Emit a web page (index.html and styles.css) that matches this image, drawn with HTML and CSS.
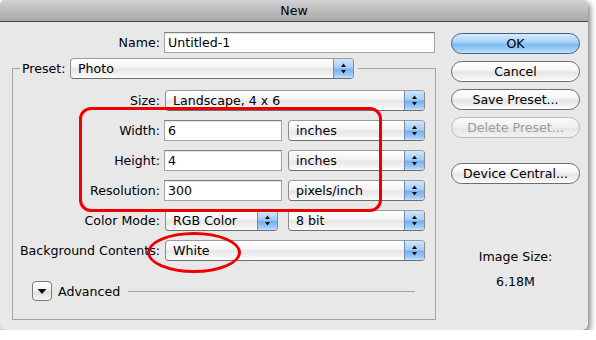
FILE: index.html
```html
<!DOCTYPE html>
<html>
<head>
<meta charset="utf-8">
<link rel="stylesheet" href="styles.css">
</head>
<body>
<div class="window">
  <div class="titlebar">New</div>
  <div class="content">
    <div class="left">
      <div class="row">
        <span class="lbl lbl-name">Name:</span>
        <span class="field f-name">Untitled-1</span>
      </div>
      <fieldset class="group">
        <legend class="legend">
          <span class="legend-text">Preset:</span>
          <span class="select s-preset"><span class="val">Photo</span><span class="arrow"><svg width="19" height="19" viewBox="0 0 19 19"><polygon points="7,8 12,8 9.5,4.5" /><polygon points="7,11 12,11 9.5,14.5" /></svg></span></span>
        </legend>
        <div class="rows">
          <div class="row">
            <span class="lbl">Size:</span>
            <span class="select s-wide"><span class="val">Landscape, 4 x 6</span><span class="arrow"><svg width="19" height="19" viewBox="0 0 19 19"><polygon points="7,8 12,8 9.5,4.5" /><polygon points="7,11 12,11 9.5,14.5" /></svg></span></span>
          </div>
          <div class="row">
            <span class="lbl">Width:</span>
            <span class="field f-num">6</span>
            <span class="select s-unit"><span class="val">inches</span><span class="arrow"><svg width="19" height="19" viewBox="0 0 19 19"><polygon points="7,8 12,8 9.5,4.5" /><polygon points="7,11 12,11 9.5,14.5" /></svg></span></span>
          </div>
          <div class="row">
            <span class="lbl">Height:</span>
            <span class="field f-num">4</span>
            <span class="select s-unit"><span class="val">inches</span><span class="arrow"><svg width="19" height="19" viewBox="0 0 19 19"><polygon points="7,8 12,8 9.5,4.5" /><polygon points="7,11 12,11 9.5,14.5" /></svg></span></span>
          </div>
          <div class="row">
            <span class="lbl">Resolution:</span>
            <span class="field f-num">300</span>
            <span class="select s-unit"><span class="val">pixels/inch</span><span class="arrow"><svg width="19" height="19" viewBox="0 0 19 19"><polygon points="7,8 12,8 9.5,4.5" /><polygon points="7,11 12,11 9.5,14.5" /></svg></span></span>
          </div>
          <div class="row">
            <span class="lbl">Color Mode:</span>
            <span class="select s-mode"><span class="val">RGB Color</span><span class="arrow"><svg width="19" height="19" viewBox="0 0 19 19"><polygon points="7,8 12,8 9.5,4.5" /><polygon points="7,11 12,11 9.5,14.5" /></svg></span></span>
            <span class="select s-unit s-bit"><span class="val">8 bit</span><span class="arrow"><svg width="19" height="19" viewBox="0 0 19 19"><polygon points="7,8 12,8 9.5,4.5" /><polygon points="7,11 12,11 9.5,14.5" /></svg></span></span>
          </div>
          <div class="row">
            <span class="lbl">Background Contents:</span>
            <span class="select s-wide"><span class="val">White</span><span class="arrow"><svg width="19" height="19" viewBox="0 0 19 19"><polygon points="7,8 12,8 9.5,4.5" /><polygon points="7,11 12,11 9.5,14.5" /></svg></span></span>
          </div>
        </div>
        <div class="adv-row">
          <span class="disclosure"><svg width="18" height="18" viewBox="0 0 18 18"><polygon points="4.5,7 13.5,7 9,12" /></svg></span>
          <span class="adv-text">Advanced</span>
          <span class="rule"></span>
        </div>
      </fieldset>
    </div>
    <div class="right">
      <span class="btn btn-ok">OK</span>
      <span class="btn">Cancel</span>
      <span class="btn">Save Preset...</span>
      <span class="btn btn-disabled">Delete Preset...</span>
      <span class="btn btn-device">Device Central...</span>
      <div class="imgsize">
        <div>Image Size:</div>
        <div>6.18M</div>
      </div>
    </div>
  </div>
  <div class="annot-rect"></div>
  <div class="annot-ellipse"></div>
</div>
</body>
</html>
```
FILE: styles.css
```css
html, body {
  margin: 0;
  padding: 0;
  background: #ffffff;
}
body {
  font-family: "DejaVu Sans", "Liberation Sans", sans-serif;
  font-size: 12.6px;
  color: #000;
}
.window {
  position: relative;
  width: 588px;
  height: 330px;
  background: #e8e8e8;
  border-radius: 5px 5px 6px 6px;
  box-shadow: 2px 3px 6px rgba(0, 0, 0, 0.55);
}
.titlebar {
  height: 21px;
  line-height: 21px;
  text-align: center;
  border-bottom: 1px solid #454545;
  border-radius: 5px 5px 0 0;
  background: linear-gradient(#d2d2d2, #a8a8a8);
}
.content {
  display: flex;
  padding-top: 10px;
}
.left {
  width: 436px;
}
.right {
  width: 129px;
  margin-left: 15px;
  display: flex;
  flex-direction: column;
}
.row {
  display: flex;
  align-items: center;
  height: 21px;
}
.rows {
  display: flex;
  flex-direction: column;
  gap: 9px;
}
.lbl {
  width: 147px;
  margin-right: 5px;
  text-align: right;
  white-space: nowrap;
}
.lbl-name {
  width: 160px;
  margin-right: 4px;
}
.field {
  display: block;
  box-sizing: border-box;
  height: 21px;
  line-height: 19px;
  padding-left: 3px;
  background: #fff;
  border: 1px solid #a2a2a2;
  border-top-color: #808080;
  box-shadow: inset 0 1px 1px rgba(0, 0, 0, 0.12);
}
.f-name {
  width: 271px;
}
.f-num {
  width: 118px;
  margin-left: -1px;
  margin-right: 6px;
}
.group {
  box-sizing: border-box;
  width: 424px;
  min-width: 0;
  margin: 5px 0 0 12px;
  padding: 11px 0 18px 0;
  border: 1px solid #a4a4a4;
}
.legend {
  display: flex;
  align-items: center;
  margin-left: 7px;
  padding: 0 4px 0 2px;
}
.legend-text {
  width: 44px;
  margin-right: 4px;
}
.select {
  box-sizing: border-box;
  height: 21px;
  display: flex;
  align-items: stretch;
  border: 1px solid #8a8a8a;
  border-top-color: #9a9a9a;
  border-bottom-color: #6e6e6e;
  border-radius: 4px;
  overflow: hidden;
  background: linear-gradient(#ffffff 0%, #f5f5f5 40%, #e7e7e7 55%, #f4f4f4 85%, #ffffff 100%);
}
.select .val {
  flex: 1;
  padding-left: 7px;
  line-height: 19px;
  white-space: nowrap;
}
.select .arrow {
  width: 19px;
  border-left: 1px solid #6f8cb8;
  background: linear-gradient(#d1e6fb 0%, #a6cdf5 45%, #78b0ee 55%, #9ccaf7 85%, #c6e3fd 100%);
}
.select .arrow svg {
  display: block;
}
.select .arrow polygon {
  fill: #111;
}
.s-preset {
  width: 284px;
}
.s-wide {
  width: 260px;
}
.s-unit {
  width: 137px;
}
.s-mode {
  width: 113px;
  margin-right: 10px;
}
.adv-row {
  display: flex;
  align-items: center;
  height: 20px;
  margin-top: 20px;
  padding-left: 19px;
}
.disclosure {
  box-sizing: border-box;
  width: 20px;
  height: 20px;
  border: 1px solid #7a7a7a;
  border-radius: 4px;
  background: linear-gradient(#ffffff, #efefef 50%, #dedede 55%, #f6f6f6);
}
.disclosure svg {
  display: block;
}
.disclosure polygon {
  fill: #111;
}
.adv-text {
  margin-left: 6px;
}
.rule {
  flex: 1;
  height: 1px;
  margin: 0 20px 0 8px;
  background: #a4a4a4;
}
.btn {
  display: block;
  box-sizing: border-box;
  height: 21px;
  line-height: 19px;
  text-align: center;
  border: 1px solid #6c6c6c;
  border-radius: 11px;
  background: linear-gradient(#ffffff 0%, #f6f6f6 40%, #e6e6e6 55%, #f3f3f3 85%, #ffffff 100%);
  white-space: nowrap;
}
.btn + .btn {
  margin-top: 7px;
}
.btn-ok {
  margin-top: 1px;
  border-color: #3f5f8f;
  background: linear-gradient(#d6eafc 0%, #add4f8 40%, #80bbf1 55%, #9fcff8 85%, #c9e6fe 100%);
}
.btn-disabled {
  color: #9c9c9c;
  border-color: #b9b9b9;
  background: linear-gradient(#fbfbfb, #eeeeee 50%, #e6e6e6 55%, #f2f2f2);
}
.btn + .btn-device {
  margin-top: 25px;
}
.imgsize {
  margin-top: 60px;
  text-align: center;
  line-height: 25px;
}
.annot-rect {
  position: absolute;
  left: 79px;
  top: 107px;
  width: 303px;
  height: 105px;
  box-sizing: border-box;
  border: 3px solid #ec0000;
  border-radius: 12px;
}
.annot-ellipse {
  position: absolute;
  left: 147px;
  top: 232px;
  width: 94px;
  height: 41px;
  box-sizing: border-box;
  border: 3px solid #ec0000;
  border-radius: 50%;
}
```
